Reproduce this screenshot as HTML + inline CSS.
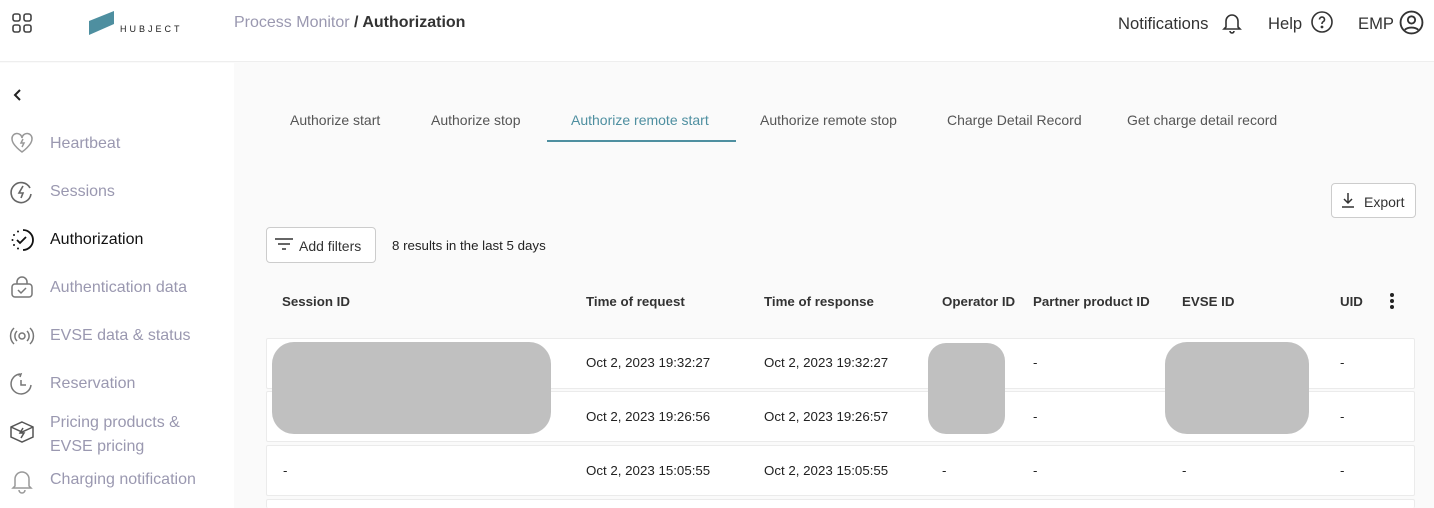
<!DOCTYPE html>
<html><head><meta charset="utf-8"><style>
*{margin:0;padding:0;box-sizing:border-box}
html,body{width:1434px;height:508px;overflow:hidden}
body{background:#fafafa;font-family:"Liberation Sans",sans-serif;position:relative;color:#222}
.a{position:absolute;white-space:nowrap}
.hdr{position:absolute;left:0;top:0;width:1434px;height:62px;background:#fff;border-bottom:1px solid #eee}
.side{position:absolute;left:0;top:63px;width:234px;height:445px;background:#fff}
.nav{font-size:16px;color:#9a98b0}
.tab{font-size:14px;color:#555;top:112px}
.th{font-size:13.3px;font-weight:bold;color:#333;top:294px}
.row{position:absolute;left:266px;width:1149px;height:51px;background:#fff;border:1px solid #ebebeb;border-radius:2px}
.td{font-size:13.3px;color:#222}
.blur{position:absolute;background:#c0c0c0;border-radius:22px}
svg{position:absolute}
</style></head><body>
<div class="hdr"></div>
<div class="side"></div>
<svg style="left:12px;top:13px" width="20" height="20" viewBox="0 0 20 20" fill="none" stroke="#444" stroke-width="1.6"><rect x="1" y="1" width="7" height="7" rx="2"/><rect x="12" y="1" width="7" height="7" rx="2"/><rect x="1" y="12" width="7" height="7" rx="2"/><rect x="12" y="12" width="7" height="7" rx="2"/></svg>
<svg style="left:89px;top:11px" width="26" height="25" viewBox="0 0 26 25"><polygon points="0,10 25,0 25,13 0,24" fill="#4e8fa0"/></svg>
<div class="a" style="left:120px;top:24px;font-size:9px;letter-spacing:3px;color:#222">HUBJECT</div>
<div class="a" style="left:234px;top:14px;font-size:16px;color:#9a98b0">Process Monitor <span style="color:#333;font-weight:bold">/ Authorization</span></div>
<div class="a" style="left:1118px;top:14px;font-size:16.6px;color:#333">Notifications</div>
<svg style="left:1220px;top:10px" width="24" height="24" viewBox="0 0 24 24" fill="none" stroke="#333" stroke-width="1.6"><path d="M6 17V11a6 6 0 0 1 12 0v6l2 2H4z"/><path d="M10 21a2 2 0 0 0 4 0"/></svg>
<div class="a" style="left:1268px;top:14px;font-size:16.6px;color:#333">Help</div>
<svg style="left:1310px;top:10px" width="24" height="24" viewBox="0 0 24 24" fill="none" stroke="#333" stroke-width="1.6"><circle cx="12" cy="12" r="10"/><path d="M9.5 9.5a2.5 2.5 0 1 1 3.5 2.3c-.7.4-1 1-1 1.7v.5"/><circle cx="12" cy="17" r=".6" fill="#333"/></svg>
<div class="a" style="left:1358px;top:14px;font-size:16.6px;color:#333">EMP</div>
<svg style="left:1399px;top:10px" width="25" height="25" viewBox="0 0 24 24" fill="none" stroke="#333" stroke-width="1.8"><circle cx="12" cy="12" r="10.5"/><circle cx="12" cy="9.5" r="3.5"/><path d="M5.5 19a8 5 0 0 1 13 0"/></svg>

<svg style="left:12px;top:88px" width="12" height="14" viewBox="0 0 12 14" fill="none" stroke="#222" stroke-width="2"><path d="M8 2L3 7l5 5"/></svg>
<svg style="left:10px;top:132px" width="24" height="22" viewBox="0 0 24 22" fill="none" stroke="#999" stroke-width="1.5"><path d="M12 20S2 13 2 7a5 5 0 0 1 10-1 5 5 0 0 1 10 1c0 6-10 13-10 13z"/><path d="M13 7l-2 4h3l-2 4"/></svg>
<div class="a nav" style="left:50px;top:135px">Heartbeat</div>
<svg style="left:10px;top:180px" width="24" height="24" viewBox="0 0 24 24" fill="none" stroke="#666" stroke-width="1.6"><path d="M20 8a10 10 0 1 0 1 6"/><path d="M13 6l-4 7h4l-2 5"/></svg>
<div class="a nav" style="left:50px;top:183px">Sessions</div>
<svg style="left:10px;top:228px" width="24" height="24" viewBox="0 0 24 24" fill="none" stroke="#111" stroke-width="1.8"><path d="M13 2a10 10 0 0 1 0 20" /><path d="M7 12l3 3 6-6"/><g fill="#111" stroke="none"><circle cx="8" cy="3.5" r="1"/><circle cx="4" cy="7" r="1"/><circle cx="2.5" cy="12" r="1"/><circle cx="4" cy="17" r="1"/><circle cx="8" cy="20.5" r="1"/></g></svg>
<div class="a" style="left:50px;top:231px;font-size:16px;color:#111">Authorization</div>
<svg style="left:10px;top:275px" width="24" height="24" viewBox="0 0 24 24" fill="none" stroke="#777" stroke-width="1.5"><rect x="2" y="9" width="20" height="13" rx="3"/><path d="M7 9V7a5 5 0 0 1 10 0v2"/><path d="M8 15l3 3 5-5"/></svg>
<div class="a nav" style="left:50px;top:279px">Authentication data</div>
<svg style="left:9px;top:324px" width="26" height="24" viewBox="0 0 26 24" fill="none" stroke="#777" stroke-width="1.5"><circle cx="13" cy="12" r="3"/><path d="M8 7a7 7 0 0 0 0 10M18 7a7 7 0 0 1 0 10M5 4a11 11 0 0 0 0 16M21 4a11 11 0 0 1 0 16"/></svg>
<div class="a nav" style="left:50px;top:327px">EVSE data &amp; status</div>
<svg style="left:10px;top:372px" width="24" height="24" viewBox="0 0 24 24" fill="none" stroke="#777" stroke-width="1.5"><path d="M10 2a10 10 0 1 0 11 11"/><path d="M8 3l3-1-1 3"/><path d="M11 8v5h5"/></svg>
<div class="a nav" style="left:50px;top:375px">Reservation</div>
<svg style="left:9px;top:420px" width="26" height="24" viewBox="0 0 26 24" fill="none" stroke="#555" stroke-width="1.5"><path d="M13 2L24 7v10L13 22 2 17V7z"/><path d="M2 7l11 5 11-5"/><path d="M14 8l-3 5h4l-3 5"/></svg>
<div class="a nav" style="left:50px;top:411px;line-height:24px">Pricing products &amp;<br>EVSE pricing</div>
<svg style="left:11px;top:468px" width="22" height="26" viewBox="0 0 22 26" fill="none" stroke="#999" stroke-width="1.5"><path d="M4 18V11a7 7 0 0 1 14 0v7l2 2H2z"/><path d="M8 22a3 3 0 0 0 6 0"/></svg>
<div class="a nav" style="left:50px;top:471px">Charging notification</div>

<div class="a tab" style="left:290px">Authorize start</div>
<div class="a tab" style="left:431px">Authorize stop</div>
<div class="a tab" style="left:571px;color:#4e8fa0">Authorize remote start</div>
<div class="a" style="left:547px;top:140px;width:189px;height:2px;background:#4e8fa0"></div>
<div class="a tab" style="left:760px">Authorize remote stop</div>
<div class="a tab" style="left:947px">Charge Detail Record</div>
<div class="a tab" style="left:1127px">Get charge detail record</div>

<div class="a" style="left:1331px;top:183px;width:85px;height:35px;border:1px solid #ccc;border-radius:4px;background:#fff"></div>
<svg style="left:1340px;top:192px" width="16" height="16" viewBox="0 0 16 16" fill="none" stroke="#333" stroke-width="1.5"><path d="M8 1v10M4 7l4 4 4-4M2 15h12"/></svg>
<div class="a" style="left:1364px;top:194px;font-size:14px;color:#333">Export</div>

<div class="a" style="left:266px;top:227px;width:110px;height:36px;border:1px solid #ccc;border-radius:4px;background:#fff"></div>
<svg style="left:274px;top:237px" width="20" height="14" viewBox="0 0 20 14" fill="none" stroke="#333" stroke-width="1.5"><path d="M1 2h18M4 7h12M8 12h4"/></svg>
<div class="a" style="left:299px;top:238px;font-size:14px;color:#333">Add filters</div>
<div class="a" style="left:392px;top:238px;font-size:13.3px;color:#222">8 results in the last 5 days</div>

<div class="a th" style="left:282px">Session ID</div>
<div class="a th" style="left:586px">Time of request</div>
<div class="a th" style="left:764px">Time of response</div>
<div class="a th" style="left:942px">Operator ID</div>
<div class="a th" style="left:1033px">Partner product ID</div>
<div class="a th" style="left:1182px">EVSE ID</div>
<div class="a th" style="left:1340px">UID</div>
<svg style="left:1388px;top:292px" width="8" height="18" viewBox="0 0 8 18" fill="#222"><circle cx="4" cy="3" r="2"/><circle cx="4" cy="9" r="2"/><circle cx="4" cy="15" r="2"/></svg>

<div class="row" style="top:338px"></div>
<div class="row" style="top:391px"></div>
<div class="row" style="top:445px"></div>
<div class="row" style="top:499px;height:9px;border-bottom:none"></div>

<div class="a td" style="left:586px;top:355px">Oct 2, 2023 19:32:27</div>
<div class="a td" style="left:764px;top:355px">Oct 2, 2023 19:32:27</div>
<div class="a td" style="left:1033px;top:355px">-</div>
<div class="a td" style="left:1340px;top:355px">-</div>
<div class="a td" style="left:586px;top:409px">Oct 2, 2023 19:26:56</div>
<div class="a td" style="left:764px;top:409px">Oct 2, 2023 19:26:57</div>
<div class="a td" style="left:1033px;top:409px">-</div>
<div class="a td" style="left:1340px;top:409px">-</div>
<div class="a td" style="left:283px;top:463px">-</div>
<div class="a td" style="left:586px;top:463px">Oct 2, 2023 15:05:55</div>
<div class="a td" style="left:764px;top:463px">Oct 2, 2023 15:05:55</div>
<div class="a td" style="left:942px;top:463px">-</div>
<div class="a td" style="left:1033px;top:463px">-</div>
<div class="a td" style="left:1182px;top:463px">-</div>
<div class="a td" style="left:1340px;top:463px">-</div>

<div class="blur" style="left:272px;top:342px;width:279px;height:92px"></div>
<div class="blur" style="left:928px;top:343px;width:77px;height:91px;border-radius:18px"></div>
<div class="blur" style="left:1165px;top:342px;width:144px;height:92px"></div>
</body></html>
